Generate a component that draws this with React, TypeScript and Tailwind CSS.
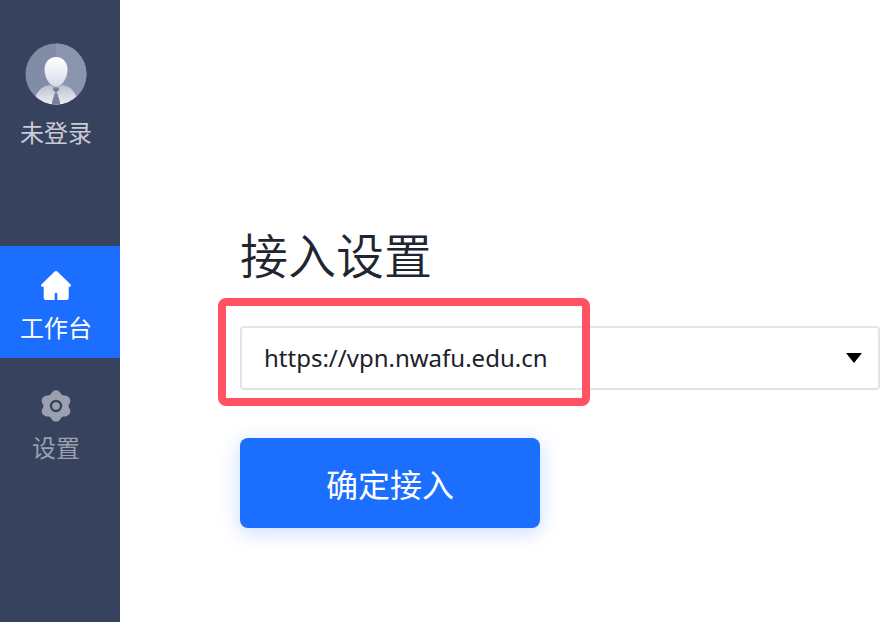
import React, { useState } from 'react';
import clsx from 'clsx';

const AvatarIcon: React.FC = () => (
  <svg viewBox="0 0 62 62" className="w-[62px] h-[62px]" aria-hidden="true">
    <defs>
      <linearGradient id="avatar-head" x1="0" y1="0" x2="0" y2="1">
        <stop offset="0" stopColor="#ffffff" />
        <stop offset="0.6" stopColor="#e8ebf3" />
        <stop offset="1" stopColor="#d3d8e4" />
      </linearGradient>
      <linearGradient id="avatar-body" x1="0" y1="0" x2="0" y2="1">
        <stop offset="0" stopColor="#bcc1cf" />
        <stop offset="1" stopColor="#eeeff3" />
      </linearGradient>
      <clipPath id="avatar-clip">
        <circle cx="31" cy="31" r="30.5" />
      </clipPath>
    </defs>
    <g clipPath="url(#avatar-clip)">
      <rect width="62" height="62" fill="#818da6" />
      <rect x="31" width="31" height="62" fill="#8b96ae" />
      <path d="M8 62c2-12 8-19 17-20l6 4 6-4c9 1 15 8 17 20z" fill="url(#avatar-body)" />
      <path d="M31 14c7 0 11.500 5.500 11.500 13C42.500 34 37 44 31 44S19.500 34 19.500 27C19.500 19.500 24 14 31 14z" fill="url(#avatar-head)" />
      <path d="M28.500 45h5l1 1.500-2.500 2.500h-2l-2.500-2.500zM30 49.500h2l3 9.500v3h-8v-3z" fill="#76829c" />
    </g>
  </svg>
);

const HomeIcon: React.FC = () => (
  <svg viewBox="0 0 32 32" className="size-8" fill="currentColor" aria-hidden="true">
    <path d="M14.600 1.600a2 2 0 0 1 2.800 0L30.600 14.500c.8.800.4 2.200-.7 2.200H28.700v11.300a2 2 0 0 1-2 2h-9.400V23.500a.4.400 0 0 0-.4-.4h-1.800a.4.400 0 0 0-.4.400V30H5.700a2 2 0 0 1-2-2V16.700H2.100c-1.100 0-1.500-1.400-.7-2.200z" />
  </svg>
);

const GearIcon: React.FC = () => (
  <svg viewBox="-16 -16 32 32" className="size-8" fill="currentColor" aria-hidden="true">
    <circle r="12.700" />
    {[0, 60, 120, 180, 240, 300].map((angle) => (
      <circle key={angle} cy="-10.300" r="5.400" transform={`rotate(${angle})`} />
    ))}
    <circle r="5" fill="none" stroke="#37425e" strokeWidth="2.400" />
  </svg>
);

interface NavItemProps {
  label: string;
  icon: React.ReactNode;
  active: boolean;
  onClick: () => void;
}

const NavItem: React.FC<NavItemProps> = ({ label, icon, active, onClick }) => (
  <button
    type="button"
    onClick={onClick}
    className={clsx(
      'flex w-full flex-col items-center gap-2 pt-6 pr-2 pb-3 text-2xl leading-9',
      active ? 'bg-[#1c6eff] text-white' : 'text-[#9ba0ae]'
    )}
  >
    {icon}
    {label}
  </button>
);

const servers = ['https://vpn.nwafu.edu.cn'];

export default function App() {
  const [page, setPage] = useState('workbench');
  const [server, setServer] = useState(servers[0]);

  return (
    <div className="flex min-h-screen bg-white font-['Noto_Sans','Noto_Sans_CJK_SC',sans-serif]">
      {/* Sidebar */}
      <aside className="w-[120px] shrink-0 bg-[#37425e]">
        <div className="flex flex-col items-center gap-2.5 pt-[43px] pr-2 pb-[95px] text-2xl leading-9 text-[#c9ccd4]">
          <AvatarIcon />
          <span>未登录</span>
        </div>
        <nav>
          <NavItem
            label="工作台"
            icon={<HomeIcon />}
            active={page === 'workbench'}
            onClick={() => setPage('workbench')}
          />
          <div className="pt-2">
            <NavItem
              label="设置"
              icon={<GearIcon />}
              active={page === 'settings'}
              onClick={() => setPage('settings')}
            />
          </div>
        </nav>
      </aside>

      {/* Access settings */}
      <main className="min-w-0 flex-1 pt-[220px] pr-4 pl-[120px]">
        <h1 className="text-5xl leading-[72px] font-[350] text-[#20262f]">
          <label htmlFor="server">接入设置</label>
        </h1>

        <div className="relative mt-[34px]">
          <select
            id="server"
            value={server}
            onChange={(e) => setServer(e.target.value)}
            className="block h-16 w-full appearance-none rounded-sm border-2 border-[#e4e4e4] bg-white px-[22px] text-2xl text-[#20222a]"
          >
            {servers.map((url) => (
              <option key={url}>{url}</option>
            ))}
          </select>
          <svg viewBox="0 0 16 10" className="pointer-events-none absolute top-[27px] right-[18px] h-[10px] w-4" aria-hidden="true">
            <path d="M0 0h16L8 10z" />
          </svg>
          {/* Highlight frame */}
          <div className="pointer-events-none absolute -top-7 -left-[22px] h-[108px] w-[372px] rounded-lg border-8 border-[#ff5364]" />
        </div>

        <button
          type="button"
          className="mt-12 h-[90px] w-[300px] rounded-lg bg-[#1c6eff] pt-1 text-[32px] text-white shadow-[0_4px_20px_rgba(28,110,255,0.25)]"
        >
          确定接入
        </button>
      </main>
    </div>
  );
}
